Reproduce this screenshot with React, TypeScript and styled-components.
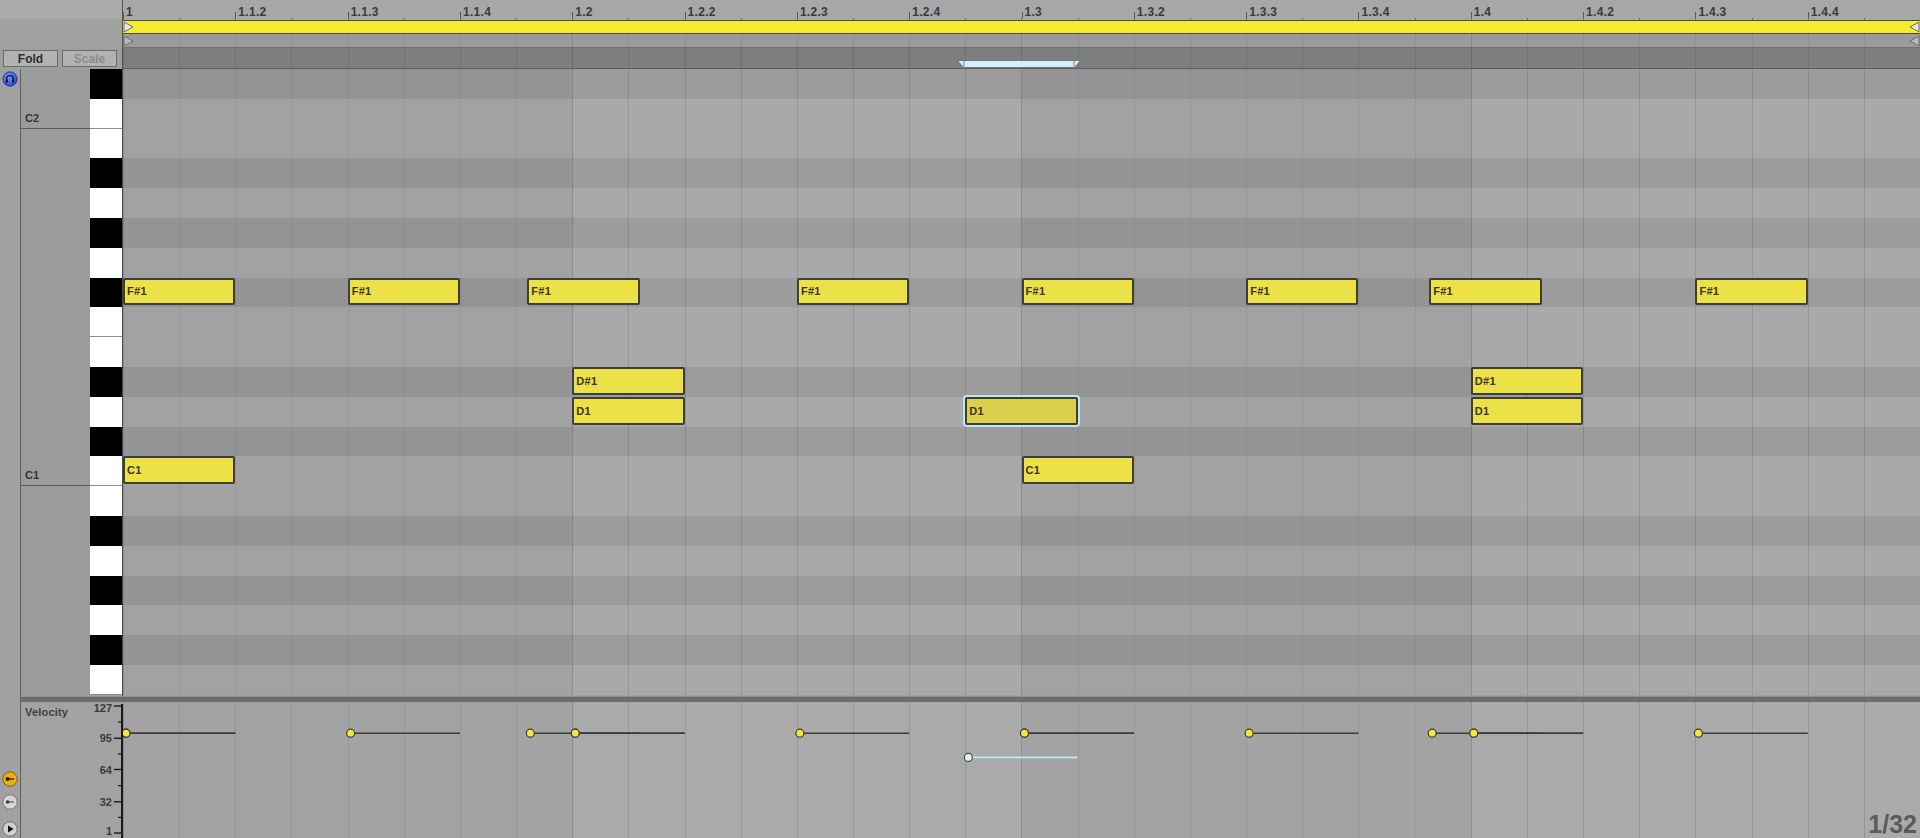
import React from "react";
import styled, { createGlobalStyle } from "styled-components";

const GRID_W = 1797;
const S16 = GRID_W / 16;
const S32 = GRID_W / 32;
const BEAT = GRID_W / 4;
const ROW_H = 29.8;

const Global = createGlobalStyle`
  html, body { margin: 0; padding: 0; background: #a0a0a0; }
  body { font-family: "Liberation Sans", Arial, sans-serif; }
  * { box-sizing: border-box; }
`;

const shading = `linear-gradient(to right, rgba(255,255,255,0) 0 25%, rgba(255,255,255,0.075) 25% 50%, rgba(255,255,255,0) 50% 75%, rgba(255,255,255,0.075) 75% 100%)`;
const lines = (minor: string, major: string) =>
  `repeating-linear-gradient(to right, ${major} 0 1px, transparent 1px ${BEAT}px), repeating-linear-gradient(to right, ${minor} 0 1px, transparent 1px ${S32}px)`;

type Row = { name: string; black: boolean; sep: boolean; label?: string };
const ROW_NAMES = ["C#2", "C2", "B1", "A#1", "A1", "G#1", "G1", "F#1", "F1", "E1", "D#1", "D1", "C#1", "C1", "B0", "A#0", "A0", "G#0", "G0", "F#0", "F0"];
const ROWS: Row[] = ROW_NAMES.map((n) => ({
  name: n,
  black: n.includes("#"),
  sep: (n.startsWith("C") && !n.includes("#")) || (n.startsWith("F") && !n.includes("#")),
  label: n === "C2" || n === "C1" ? n : undefined,
}));

type Note = { pitch: string; start: number; vel: number; selected?: boolean };
const NOTES: Note[] = [
  { pitch: "F#1", start: 0, vel: 100 },
  { pitch: "C1", start: 0, vel: 100 },
  { pitch: "F#1", start: 2, vel: 100 },
  { pitch: "F#1", start: 3.6, vel: 100 },
  { pitch: "D#1", start: 4, vel: 100 },
  { pitch: "D1", start: 4, vel: 100 },
  { pitch: "F#1", start: 6, vel: 100 },
  { pitch: "F#1", start: 8, vel: 100 },
  { pitch: "C1", start: 8, vel: 100 },
  { pitch: "F#1", start: 10, vel: 100 },
  { pitch: "F#1", start: 11.63, vel: 100 },
  { pitch: "D#1", start: 12, vel: 100 },
  { pitch: "D1", start: 12, vel: 100 },
  { pitch: "F#1", start: 14, vel: 100 },
  { pitch: "D1", start: 7.5, vel: 76, selected: true },
];

const RULER = ["1", "1.1.2", "1.1.3", "1.1.4", "1.2", "1.2.2", "1.2.3", "1.2.4", "1.3", "1.3.2", "1.3.3", "1.3.4", "1.4", "1.4.2", "1.4.3", "1.4.4"];

/* ---------- layout ---------- */
const Screen = styled.div`
  width: 1920px;
  height: 838px;
  overflow: hidden;
  display: flex;
  flex-direction: column;
  background: #a0a0a0;
`;

const Header = styled.div`
  display: grid;
  grid-template-columns: 122px 1fr;
  height: 69px;
  flex: none;
`;

const HeaderLeft = styled.div`
  display: flex;
  flex-direction: column;
  background: #a1a1a1;
`;

const HeaderTop = styled.div`
  height: 19px;
  background: #ababab;
`;

const HeaderMid = styled.div`
  flex: 1;
  background: #a1a1a1;
`;

const FoldRow = styled.div`
  height: 22px;
  display: flex;
  gap: 4px;
  padding: 3px 5px 2px 3px;
  background: #9f9f9f;
`;

const ToolButton = styled.div<{ $dim?: boolean }>`
  width: 55px;
  height: 17px;
  border: 1px solid #6b6b6b;
  background: #b2b2b2;
  display: flex;
  align-items: center;
  justify-content: center;
  font-weight: bold;
  font-size: 12px;
  color: ${(p) => (p.$dim ? "#8c8c8c" : "#2c2c2c")};
`;

const Timeline = styled.div`
  display: flex;
  flex-direction: column;
  border-left: 1px solid #555;
`;

const Ruler = styled.div`
  height: 20px;
  display: grid;
  grid-template-columns: repeat(16, 1fr);
  background-color: #a7a7a7;
  background-image: repeating-linear-gradient(to right, #6e6e6e 0 1px, transparent 1px ${S32}px);
  background-size: 100% 2px;
  background-repeat: no-repeat;
  background-position: left bottom;
`;

const RulerCell = styled.div`
  display: flex;
  align-items: flex-end;
  padding-bottom: 2px;
`;

const RulerTick = styled.span`
  width: 1px;
  height: 6px;
  background: #555;
  flex: none;
`;

const RulerLabel = styled.span`
  margin-left: 2px;
  font-weight: bold;
  font-size: 12px;
  line-height: 12px;
  color: #3a3a3a;
  letter-spacing: 0.3px;
`;

const LoopBar = styled.div`
  height: 14px;
  background: #f5ec2e;
  border-top: 1px solid #4c4c4c;
  border-bottom: 1px solid #4c4c4c;
  display: flex;
  justify-content: space-between;
  align-items: center;
`;

const StartStrip = styled.div`
  height: 14px;
  background-color: #9a9a9a;
  background-image: ${lines("#8c8c8c", "#868686")};
  display: flex;
  justify-content: space-between;
  align-items: center;
  border-bottom: 1px solid #707070;
`;

const ClipStrip = styled.div`
  flex: 1;
  position: relative;
  background-color: #7e7e7e;
  background-image: ${lines("#727272", "#6c6c6c")};
  border-bottom: 1px solid #5e5e5e;
`;

const SelectionMarker = styled.svg`
  position: absolute;
  bottom: 0;
  height: 8px;
  width: 124px;
`;

const Body = styled.div`
  flex: 1;
  display: grid;
  grid-template-columns: 21px 1fr;
  min-height: 0;
`;

const SideStrip = styled.div`
  background: #a1a1a1;
  border-right: 1px solid #5f5f5f;
  display: flex;
  flex-direction: column;
  align-items: center;
  padding-top: 2px;
`;

const SideSpacer = styled.div`
  flex: 1;
`;

const SideIcon = styled.svg<{ $gap?: number }>`
  width: 16px;
  height: 16px;
  flex: none;
  margin-top: ${(p) => p.$gap ?? 0}px;
`;

const Editors = styled.div`
  display: flex;
  flex-direction: column;
  min-width: 0;
`;

const NoteEditor = styled.div`
  display: grid;
  grid-template-columns: 69px 33px 1fr;
  height: 627px;
  flex: none;
  overflow: hidden;
`;

const KeyLabels = styled.div`
  display: flex;
  flex-direction: column;
  background: #9b9b9b;
`;

const LabelCell = styled.div<{ $line: boolean }>`
  height: ${ROW_H}px;
  flex: none;
  display: flex;
  align-items: flex-end;
  padding: 0 0 4px 4px;
  border-bottom: ${(p) => (p.$line ? "1px solid #5c5c5c" : "none")};
  font-weight: bold;
  font-size: 11px;
  line-height: 12px;
  color: #353535;
`;

const Keys = styled.div`
  display: flex;
  flex-direction: column;
  border-right: 1px solid #4a4a4a;
`;

const Key = styled.div<{ $black: boolean; $sep: boolean }>`
  height: ${ROW_H}px;
  flex: none;
  background: ${(p) => (p.$black ? "#000" : "#fff")};
  border-bottom: ${(p) => (p.$sep ? "1px solid #8e8e8e" : "none")};
`;

const NoteGrid = styled.div`
  position: relative;
  display: flex;
  flex-direction: column;
`;

const GridRow = styled.div<{ $black: boolean }>`
  height: ${ROW_H}px;
  flex: none;
  background-color: ${(p) => (p.$black ? "#949494" : "#a2a2a2")};
  background-image: ${(p) =>
    p.$black ? lines("#8a8a8a", "#838383") : lines("#979797", "#8d8d8d")}, ${shading};
`;

const NoteBlock = styled.div<{ $sel?: boolean }>`
  position: absolute;
  height: ${ROW_H - 2}px;
  background: ${(p) => (p.$sel ? "#dbcf4c" : "#ece146")};
  border: 2px solid #3d3d3d;
  border-radius: 2px;
  box-shadow: ${(p) => (p.$sel ? "0 0 0 2px #bfe6f3" : "none")};
  display: flex;
  align-items: center;
  padding-left: 2px;
  font-weight: bold;
  font-size: 11px;
  letter-spacing: 0.3px;
  color: #3a3622;
  overflow: hidden;
`;

const Splitter = styled.div`
  height: 6px;
  flex: none;
  background: #6d6d6d;
  border-top: 1px solid #8f8f8f;
`;

const VelocityEditor = styled.div`
  flex: 1;
  display: grid;
  grid-template-columns: 102px 1fr;
  min-height: 0;
`;

const VelocityAxis = styled.div`
  position: relative;
  background: #a2a2a2;
`;

const AxisTitle = styled.div`
  position: absolute;
  left: 4px;
  top: 4px;
  font-weight: bold;
  font-size: 11px;
  color: #3e3e3e;
  letter-spacing: 0.2px;
`;

const AxisSvg = styled.svg`
  display: block;
  width: 102px;
  height: 136px;
`;

const VelocityLane = styled.div`
  position: relative;
  background-color: #a3a3a3;
  background-image: ${lines("#979797", "#8d8d8d")}, ${shading};
`;

const LaneSvg = styled.svg`
  display: block;
  width: ${GRID_W}px;
  height: 136px;
`;

const QuantLabel = styled.div`
  position: absolute;
  right: 3px;
  bottom: 1px;
  font-weight: bold;
  font-size: 25px;
  line-height: 25px;
  color: #5a5a5a;
`;

/* ---------- icons ---------- */
const MarkerRight = ({ filled }: { filled: boolean }) => (
  <svg width="12" height="12" viewBox="0 0 12 12" style={{ display: "block" }}>
    <path d="M1 1 L10 6 L1 11 Z" fill={filled ? "#e6e6e6" : "#b8b8b8"} stroke="#6a6a6a" strokeWidth="1" />
  </svg>
);
const MarkerLeft = ({ filled }: { filled: boolean }) => (
  <svg width="12" height="12" viewBox="0 0 12 12" style={{ display: "block" }}>
    <path d="M11 1 L2 6 L11 11 Z" fill={filled ? "#e6e6e6" : "#b8b8b8"} stroke="#6a6a6a" strokeWidth="1" />
  </svg>
);

const vy = (v: number) => 4 + (127 - v) * 1.008;
const labelY = (v: number) => (v === 127 ? vy(v) + 6 : v === 1 ? vy(v) + 2 : vy(v) + 4);

export default function App() {
  const rowIndex = (p: string) => ROW_NAMES.indexOf(p);
  const sel = NOTES.find((n) => n.selected)!;
  return (
    <Screen>
      <Global />
      <Header>
        <HeaderLeft>
          <HeaderTop />
          <HeaderMid />
          <FoldRow>
            <ToolButton>Fold</ToolButton>
            <ToolButton $dim>Scale</ToolButton>
          </FoldRow>
        </HeaderLeft>
        <Timeline>
          <Ruler>
            {RULER.map((r) => (
              <RulerCell key={r}>
                <RulerTick />
                <RulerLabel>{r}</RulerLabel>
              </RulerCell>
            ))}
          </Ruler>
          <LoopBar>
            <MarkerRight filled />
            <MarkerLeft filled />
          </LoopBar>
          <StartStrip>
            <MarkerRight filled={false} />
            <MarkerLeft filled={false} />
          </StartStrip>
          <ClipStrip>
            <SelectionMarker viewBox="0 0 124 8" style={{ left: sel.start * S16 - 8 }}>
              <path d="M0.5 0.5 L123.5 0.5 L117.5 7.5 L6.5 7.5 Z" fill="#d3f1fa" stroke="#5a6a70" strokeWidth="0.8" />
              <line x1="7" y1="1" x2="7" y2="7.5" stroke="#6f8a92" strokeWidth="1" />
              <line x1="117" y1="1" x2="117" y2="7.5" stroke="#6f8a92" strokeWidth="1" />
            </SelectionMarker>
          </ClipStrip>
        </Timeline>
      </Header>
      <Body>
        <SideStrip>
          <SideIcon viewBox="0 0 16 16" $gap={0}>
            <defs>
              <radialGradient id="hp" cx="0.4" cy="0.35" r="0.7">
                <stop offset="0" stopColor="#6c95ff" />
                <stop offset="1" stopColor="#2648c8" />
              </radialGradient>
            </defs>
            <circle cx="8" cy="8" r="7.2" fill="url(#hp)" stroke="#1c2f78" strokeWidth="0.8" />
            <path d="M4.6 10 V8 A3.4 3.4 0 0 1 11.4 8 V10" fill="none" stroke="#0c1530" strokeWidth="1.3" />
            <rect x="3.8" y="8.6" width="2.2" height="3.2" rx="0.8" fill="#0c1530" />
            <rect x="10" y="8.6" width="2.2" height="3.2" rx="0.8" fill="#0c1530" />
          </SideIcon>
          <SideSpacer />
          <SideIcon viewBox="0 0 16 16">
            <circle cx="8" cy="8" r="7.2" fill="#f2ac0c" stroke="#7a5a10" strokeWidth="0.9" />
            <line x1="4" y1="8" x2="12" y2="8" stroke="#1c1c1c" strokeWidth="1.3" />
            <circle cx="5.6" cy="8" r="2" fill="#1c1c1c" />
          </SideIcon>
          <SideIcon viewBox="0 0 16 16" $gap={7}>
            <circle cx="8" cy="8" r="7.2" fill="#d6d6d6" stroke="#727272" strokeWidth="0.9" />
            <line x1="4" y1="8" x2="12" y2="8" stroke="#555" strokeWidth="1.2" />
            <circle cx="5.6" cy="8" r="1.8" fill="#3a3a3a" />
          </SideIcon>
          <SideIcon viewBox="0 0 16 16" $gap={11}>
            <circle cx="8" cy="8" r="7.2" fill="#d0d0d0" stroke="#6a6a6a" strokeWidth="0.9" />
            <path d="M6 4.5 L11.5 8 L6 11.5 Z" fill="#111" />
          </SideIcon>
          <div style={{ height: 1 }} />
        </SideStrip>
        <Editors>
          <NoteEditor>
            <KeyLabels>
              {ROWS.map((r) => (
                <LabelCell key={r.name} $line={!!r.label}>
                  {r.label}
                </LabelCell>
              ))}
            </KeyLabels>
            <Keys>
              {ROWS.map((r) => (
                <Key key={r.name} $black={r.black} $sep={r.sep} />
              ))}
            </Keys>
            <NoteGrid>
              {ROWS.map((r) => (
                <GridRow key={r.name} $black={r.black} />
              ))}
              {NOTES.map((n, i) => (
                <NoteBlock
                  key={i}
                  $sel={n.selected}
                  style={{ left: n.start * S16, top: rowIndex(n.pitch) * ROW_H, width: S16 }}
                >
                  {n.pitch}
                </NoteBlock>
              ))}
            </NoteGrid>
          </NoteEditor>
          <Splitter />
          <VelocityEditor>
            <VelocityAxis>
              <AxisTitle>Velocity</AxisTitle>
              <AxisSvg viewBox="0 0 102 136">
                <line x1="101" y1="2" x2="101" y2="136" stroke="#1a1a1a" strokeWidth="2" />
                {[127, 95, 64, 32, 1].map((v) => (
                  <g key={v}>
                    <line x1="93" y1={vy(v)} x2="100" y2={vy(v)} stroke="#1a1a1a" strokeWidth="1.4" />
                    <text
                      x="91"
                      y={labelY(v)}
                      textAnchor="end"
                      fontFamily="Liberation Sans, Arial, sans-serif"
                      fontWeight="bold"
                      fontSize="11"
                      fill="#3a3a3a"
                    >
                      {v}
                    </text>
                  </g>
                ))}
                {[111, 79.5, 48, 16.5].map((v) => (
                  <line key={v} x1="97" y1={vy(v)} x2="100" y2={vy(v)} stroke="#1a1a1a" strokeWidth="1.2" />
                ))}
              </AxisSvg>
            </VelocityAxis>
            <VelocityLane>
              <LaneSvg viewBox={`0 0 ${GRID_W} 136`}>
                {NOTES.map((n, i) => {
                  const x = n.start * S16 + 3;
                  const y = vy(n.vel);
                  const col = n.selected ? "#c4e7f0" : "#3a3a3a";
                  return (
                    <g key={i}>
                      <line x1={x} y1={y} x2={n.start * S16 + S16} y2={y} stroke={col} strokeWidth="1.6" />
                      <circle
                        cx={x}
                        cy={y}
                        r="4"
                        fill={n.selected ? "#e2f2f5" : "#f3e83a"}
                        stroke={n.selected ? "#3e4a4e" : "#3a3a3a"}
                        strokeWidth="1.2"
                      />
                    </g>
                  );
                })}
              </LaneSvg>
              <QuantLabel>1/32</QuantLabel>
            </VelocityLane>
          </VelocityEditor>
        </Editors>
      </Body>
    </Screen>
  );
}
